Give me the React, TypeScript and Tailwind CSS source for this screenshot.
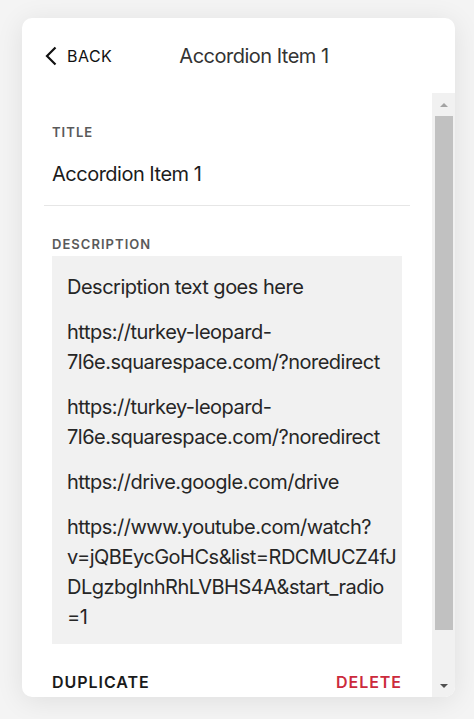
const paragraphs: string[][] = [
  ["Description text goes here"],
  ["https://turkey-leopard-", "7l6e.squarespace.com/?noredirect"],
  ["https://turkey-leopard-", "7l6e.squarespace.com/?noredirect"],
  ["https://drive.google.com/drive"],
  [
    "https://www.youtube.com/watch?",
    "v=jQBEycGoHCs&list=RDCMUCZ4fJ",
    "DLgzbgInhRhLVBHS4A&start_radio",
    "=1",
  ],
];

const Label = ({ children }: { children: string }) => (
  <div className="text-[13px] font-semibold uppercase leading-4 tracking-[0.08em] text-[#5a5a5a]">
    {children}
  </div>
);

const Scrollbar = () => (
  <div className="flex w-[23px] shrink-0 flex-col bg-[#f1f1f1]">
    <div className="flex h-[23px] w-full items-center justify-center">
      <div className="h-0 w-0 border-x-[4px] border-b-[4px] border-x-transparent border-b-[#a3a3a3]" />
    </div>
    <div className="ml-[3px] h-[514px] w-[18px] bg-[#c1c1c1]" />
    <div className="flex-1" />
    <div className="flex h-[23px] w-full items-center justify-center">
      <div className="h-0 w-0 border-x-[4px] border-t-[4px] border-x-transparent border-t-[#505050]" />
    </div>
  </div>
);

export default function App() {
  return (
    <div
      className="h-[719px] w-[474px] overflow-hidden bg-[#f4f4f4] pl-[22px] pt-[18px]"
      style={{ fontFamily: "Inter, 'Noto Sans', sans-serif" }}
    >
      <div className="flex h-[679px] w-[433px] flex-col overflow-hidden rounded-[10px] bg-white shadow-[0_4px_28px_rgba(0,0,0,0.09)]">
        <div className="flex h-[75px] shrink-0 items-center pl-[23px]">
          <button className="flex items-center gap-[10px] text-[#111]">
            <svg width="12" height="20" viewBox="0 0 12 20" fill="none">
              <path d="M10.5 1.5 2 10l8.5 8.5" stroke="currentColor" strokeWidth="2.2" />
            </svg>
            <span className="text-[16px] tracking-[0.03em]">BACK</span>
          </button>
          <div className="ml-[67px] text-[20px] tracking-[-0.025em] text-[#333]">
            Accordion Item 1
          </div>
        </div>

        <div className="flex min-h-0 flex-1">
          <div className="min-w-0 flex-1 overflow-hidden px-[30px] pt-[31px]">
            <Label>Title</Label>
            <div className="mt-[19px] text-[20px] leading-[30px] tracking-[-0.025em] text-[#1c1c1c]">
              Accordion Item 1
            </div>
            <div className="-mx-[8px] mt-[16px] h-px bg-[#e6e6e6]" />

            <div className="mt-[30px]">
              <Label>Description</Label>
            </div>
            <div className="mt-[4px] flex flex-col gap-[15px] bg-[#f1f1f1] px-[15px] pb-[12px] pt-[16px] text-[20px] leading-[30px] tracking-[-0.025em] text-[#262626]">
              {paragraphs.map((lines, i) => (
                <p key={i}>
                  {lines.map((line, j) => (
                    <span key={j} className="block whitespace-nowrap">
                      {line}
                    </span>
                  ))}
                </p>
              ))}
            </div>

            <div className="mt-[28px] flex items-center justify-between text-[16px] font-semibold leading-5 tracking-[0.06em]">
              <button className="text-[#1a1a1a]">DUPLICATE</button>
              <button className="text-[#cc2a3c]">DELETE</button>
            </div>
          </div>
          <Scrollbar />
        </div>
      </div>
    </div>
  );
}
